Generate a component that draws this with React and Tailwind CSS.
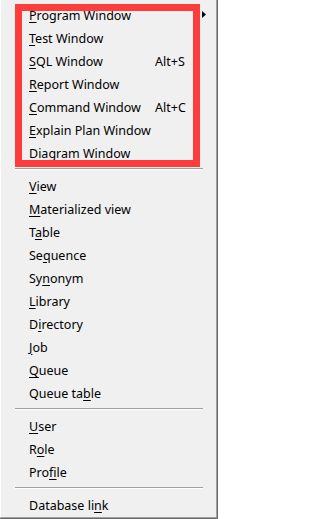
import React from 'react'

const groups = [
  [
    { label: '&Program Window', submenu: true },
    { label: '&Test Window' },
    { label: '&SQL Window', shortcut: 'Alt+S' },
    { label: '&Report Window' },
    { label: '&Command Window', shortcut: 'Alt+C' },
    { label: '&Explain Plan Window' },
    { label: '&Diagram Window' },
  ],
  [
    { label: '&View' },
    { label: '&Materialized view' },
    { label: 'T&able' },
    { label: 'Se&quence' },
    { label: 'Sy&nonym' },
    { label: '&Library' },
    { label: 'D&irectory' },
    { label: '&Job' },
    { label: '&Queue' },
    { label: 'Queue ta&ble' },
  ],
  [
    { label: '&User' },
    { label: 'R&ole' },
    { label: 'Pro&file' },
  ],
  [{ label: 'Database li&nk' }],
]

function Label({ text }) {
  const i = text.indexOf('&')
  if (i < 0) return text
  return (
    <>
      {text.slice(0, i)}
      <span className="underline decoration-1 underline-offset-[2px]">{text[i + 1]}</span>
      {text.slice(i + 2)}
    </>
  )
}

function Item({ item }) {
  return (
    <div className="h-[23px] flex items-center pl-[28px] pr-[10px]">
      <span className="w-[126px] shrink-0 whitespace-nowrap pt-[3px]">
        <Label text={item.label} />
      </span>
      {item.shortcut && <span className="whitespace-nowrap pt-[3px]">{item.shortcut}</span>}
      {item.submenu && (
        <svg className="ml-auto" width="4" height="7" viewBox="0 0 4 7">
          <polygon points="0,0 4,3.5 0,7" fill="#000" />
        </svg>
      )}
    </div>
  )
}

function Separator() {
  return (
    <div className="h-[10px] pt-[4px] pl-[14px]">
      <div className="w-[188px] border-t border-t-[#a0a0a0] border-b border-b-white" />
    </div>
  )
}

export default function App() {
  return (
    <div className="relative w-[218px] h-[519px] flex border-r border-b border-[#696969] font-['Noto_Sans',sans-serif] text-[12.5px] text-black">
      <div className="flex-1 bg-[#f0f0f0] border-l border-l-white border-r border-b border-r-[#a0a0a0] border-b-[#a0a0a0] pt-[3px]">
        {groups.map((group, gi) => (
          <div key={gi}>
            {gi > 0 && <Separator />}
            {group.map((item) => (
              <Item key={item.label} item={item} />
            ))}
          </div>
        ))}
      </div>
      <div className="absolute left-[15px] top-[4px] w-[185px] h-[163px] border-[7px] border-[#fd3c3c]" />
    </div>
  )
}
